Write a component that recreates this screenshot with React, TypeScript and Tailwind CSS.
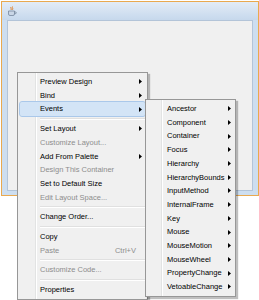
import React from "react"

type Item =
  | { sep: true }
  | { label: string; disabled?: boolean; sub?: boolean; hot?: boolean; key?: string }

const mainItems: Item[] = [
  { label: "Preview Design", sub: true },
  { label: "Bind", sub: true },
  { label: "Events", sub: true, hot: true },
  { sep: true },
  { label: "Set Layout", sub: true },
  { label: "Customize Layout...", disabled: true },
  { label: "Add From Palette", sub: true },
  { label: "Design This Container", disabled: true },
  { label: "Set to Default Size" },
  { label: "Edit Layout Space...", disabled: true },
  { sep: true },
  { label: "Change Order..." },
  { sep: true },
  { label: "Copy" },
  { label: "Paste", disabled: true, key: "Ctrl+V" },
  { sep: true },
  { label: "Customize Code...", disabled: true },
  { sep: true },
  { label: "Properties" },
]

const eventItems = [
  "Ancestor",
  "Component",
  "Container",
  "Focus",
  "Hierarchy",
  "HierarchyBounds",
  "InputMethod",
  "InternalFrame",
  "Key",
  "Mouse",
  "MouseMotion",
  "MouseWheel",
  "PropertyChange",
  "VetoableChange",
]

function Arrow() {
  return (
    <svg width="3" height="5" viewBox="0 0 3 5" className="shrink-0">
      <path d="M0 0 L3 2.5 L0 5 Z" fill="#000" />
    </svg>
  )
}

function JavaIcon() {
  return (
    <svg width="10" height="10" viewBox="0 0 10 10">
      <path d="M1.5 5 h6 v3 a1.5 1.5 0 0 1 -1.5 1.5 h-3 a1.5 1.5 0 0 1 -1.5 -1.5 z" fill="#c9d6e6" stroke="#6b7d93" strokeWidth="0.7" />
      <path d="M7.5 6 h1 a0.8 0.8 0 0 1 0 1.6 h-1" fill="none" stroke="#6b7d93" strokeWidth="0.7" />
      <path d="M4 1 c-1 1 1 1.5 0 3 M5.5 0.5 c-1 1.2 1 1.6 0 3.3" fill="none" stroke="#e07a1f" strokeWidth="0.9" />
    </svg>
  )
}

export default function App() {
  return (
    <div className="relative w-[259px] h-[300px] bg-white overflow-hidden font-['Liberation_Sans',Arial,sans-serif] text-[7.5px] leading-none">
      {/* form frame */}
      <div className="ml-px mt-px w-[258px] h-[195px] border border-[#e9a94f] bg-[#cddef0] flex flex-col">
        <div className="h-[18px] shrink-0 flex items-center pl-[5px] bg-gradient-to-b from-[#e3ecf7] to-[#c6d8ec]">
          <JavaIcon />
        </div>
        <div className="flex-1 mx-[5px] mb-[4px] bg-[#f0f0f0] border border-[#b3c4d8]" />
      </div>

      {/* context menu */}
      <div className="absolute left-[17px] top-[72px] w-[131px] bg-[#f0f0f0] border border-[#979797] py-[2px] pl-[2px] pr-[2px] shadow-[2px_2px_1px_rgba(0,0,0,0.25)]">
        <div className="absolute left-[17px] top-0 bottom-0 w-px bg-[#e2e3e3]" />
        <div className="absolute left-[18px] top-0 bottom-0 w-px bg-white" />
        {mainItems.map((it, i) =>
          "sep" in it ? (
            <div key={i} className="h-[6px] flex flex-col justify-center pl-[20px]">
              <div className="h-px bg-[#e0e0e0]" />
              <div className="h-px bg-white" />
            </div>
          ) : (
            <div
              key={i}
              className={`relative h-[13.7px] flex items-center pl-[20px] pr-[3px] rounded-[2px] ${
                it.hot ? "bg-[#d3e4f6] outline outline-1 outline-[#aac8ea]" : ""
              } ${it.disabled ? "text-[#8d8d8d]" : "text-black"}`}
            >
              <span className="flex-1 whitespace-nowrap">{it.label}</span>
              {it.key && <span className="mr-[6px]">{it.key}</span>}
              {it.sub && <Arrow />}
            </div>
          )
        )}
      </div>

      {/* events submenu */}
      <div className="absolute left-[145px] top-[99px] w-[91px] bg-[#f0f0f0] border border-[#979797] py-[2px] px-[2px] shadow-[2px_2px_1px_rgba(0,0,0,0.25)]">
        <div className="absolute left-[15px] top-0 bottom-0 w-px bg-[#e2e3e3]" />
        <div className="absolute left-[16px] top-0 bottom-0 w-px bg-white" />
        {eventItems.map((label) => (
          <div key={label} className="h-[13.7px] flex items-center pl-[19px] pr-[2px] text-black">
            <span className="flex-1 whitespace-nowrap">{label}</span>
            <Arrow />
          </div>
        ))}
      </div>
    </div>
  )
}
